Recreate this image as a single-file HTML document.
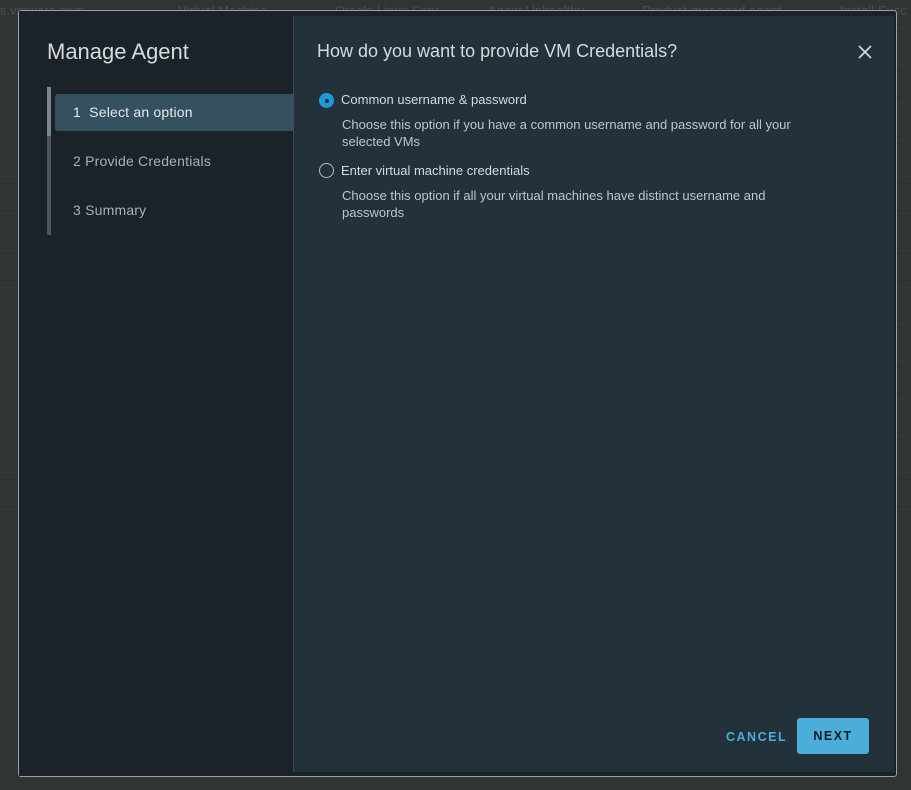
<!DOCTYPE html>
<html><head><style>
body{margin:0;width:911px;height:790px;background:#303533;font-family:"Liberation Sans",sans-serif;position:relative;overflow:hidden}
.bg{position:absolute;color:#4a504d;font-size:13px;white-space:nowrap}
.row{position:absolute;left:0;width:911px;height:1px;background:#363b39}
.modal{position:absolute;left:18px;top:10px;width:877px;height:765px;border:1px solid #9aa0a3;border-radius:3px;background:#1b2329}
.left{position:absolute;left:0;top:0;width:274px;height:765px;background:#1b2329}
.right{position:absolute;left:274px;top:5px;width:600px;height:756px;background:#22313a;border-left:1px solid #3d4a52}
h1{position:absolute;left:28px;top:28px;margin:0;font-weight:normal;font-size:22px;color:#d5dadd}
.bar{position:absolute;left:28px;top:76px;width:4px;height:148px;background:#4e565c}
.bar1{position:absolute;left:28px;top:76px;width:4px;height:49px;background:#7d858a}
.step{position:absolute;left:36px;width:238px;height:37px;line-height:37px;padding-left:18px;box-sizing:border-box;font-size:14px;color:#a8b0b5;letter-spacing:.2px}
.act{background:#35505f;color:#e4e9ec;border-radius:3px 0 0 3px}
h2{position:absolute;left:23px;top:25px;margin:0;font-weight:normal;font-size:18px;color:#d5dadd}
.x{position:absolute;left:564px;top:29px}
.radio{position:absolute;left:25px;width:15px;height:15px;border-radius:50%;box-sizing:border-box}
.lbl{position:absolute;left:47px;font-size:13px;color:#d5dadd}
.desc{position:absolute;left:48px;width:500px;font-size:13px;line-height:17px;color:#bfc6ca}
.cancel{position:absolute;left:707px;top:719px;font-size:12.5px;font-weight:bold;letter-spacing:1.5px;color:#4aaed9}
.next{position:absolute;left:778px;top:707px;width:72px;height:36px;background:#4aaed9;border-radius:3px;text-align:center;line-height:36px;font-size:12.5px;font-weight:bold;letter-spacing:1.5px;color:#0e1a20}
</style></head><body>
<div class="bg" style="left:0;top:3px">s.vmware.com</div>
<div class="bg" style="left:178px;top:3px">Virtual Machine</div>
<div class="bg" style="left:335px;top:3px">Oracle Linux Serv</div>
<div class="bg" style="left:488px;top:3px">Agent Unhealthy</div>
<div class="bg" style="left:642px;top:3px">Product-managed agent</div>
<div class="bg" style="left:840px;top:3px">Install Succ</div>
<div class="row" style="top:28px"></div><div class="row" style="top:65px"></div><div class="row" style="top:102px"></div><div class="row" style="top:139px"></div><div class="row" style="top:176px"></div><div class="row" style="top:213px"></div><div class="row" style="top:250px"></div><div class="row" style="top:287px"></div><div class="row" style="top:324px"></div><div class="row" style="top:361px"></div><div class="row" style="top:398px"></div><div class="row" style="top:435px"></div><div class="row" style="top:472px"></div><div class="row" style="top:509px"></div>
<div class="modal">
<div class="left">
<h1>Manage Agent</h1>
<div class="bar"></div><div class="bar1"></div>
<div class="step act" style="top:83px">1&nbsp; Select an option</div>
<div class="step" style="top:132px">2 Provide Credentials</div>
<div class="step" style="top:181px">3 Summary</div>
</div>
<div class="right">
<h2>How do you want to provide VM Credentials?</h2>
<svg class="x" width="14" height="14" viewBox="0 0 14 14"><path d="M1 1L13 13M13 1L1 13" stroke="#d5dadd" stroke-width="1.6"/></svg>
<div class="radio" style="top:77px;background:#1d9bd9"><div style="position:absolute;left:5.5px;top:5.5px;width:4px;height:4px;background:#22313a;border-radius:50%"></div></div>
<div class="lbl" style="top:76px">Common username &amp; password</div>
<div class="desc" style="top:100px">Choose this option if you have a common username and password for all your<br>selected VMs</div>
<div class="radio" style="top:147px;border:1.5px solid #b5bcc0"></div>
<div class="lbl" style="top:147px">Enter virtual machine credentials</div>
<div class="desc" style="top:171px">Choose this option if all your virtual machines have distinct username and<br>passwords</div>
</div>
<div class="cancel">CANCEL</div>
<div class="next">NEXT</div>
</div>
</body></html>
